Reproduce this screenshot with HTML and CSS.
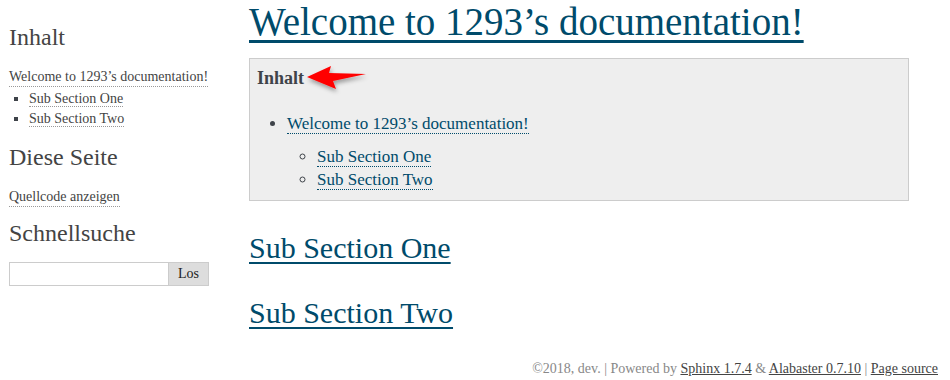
FILE: index.html
```html
<!DOCTYPE html>
<html lang="de">
<head>
<meta charset="utf-8">
<title>Welcome to 1293’s documentation!</title>
<link rel="stylesheet" href="styles.css">
</head>
<body>
<div class="page">
  <aside class="sidebar">
    <h3 class="side-title first">Inhalt</h3>
    <a class="side-link" href="#">Welcome to 1293’s documentation!</a>
    <ul class="side-list">
      <li><a class="side-link" href="#">Sub Section One</a></li>
      <li><a class="side-link" href="#">Sub Section Two</a></li>
    </ul>
    <h3 class="side-title">Diese Seite</h3>
    <a class="side-link" href="#">Quellcode anzeigen</a>
    <h3 class="side-title search-title">Schnellsuche</h3>
    <form class="search">
      <input class="search-input" type="text">
      <button class="search-btn" type="button">Los</button>
    </form>
  </aside>
  <main class="main">
    <h1 class="title"><a href="#">Welcome to 1293’s documentation!</a></h1>
    <div class="toc">
      <p class="toc-title">Inhalt</p>
      <svg class="arrow" width="72" height="34" viewBox="0 0 72 34">
        <defs>
          <filter id="sh" x="-20%" y="-40%" width="150%" height="190%">
            <feDropShadow dx="1" dy="3" stdDeviation="2" flood-color="#000" flood-opacity="0.35"/>
          </filter>
        </defs>
        <polygon filter="url(#sh)" fill="#ff0000" points="3,15 27,4 25,11 62,12 29,19 32,27"/>
      </svg>
      <ul class="toc-list">
        <li><a href="#">Welcome to 1293’s documentation!</a>
          <ul class="toc-sub">
            <li><a href="#">Sub Section One</a></li>
            <li><a href="#">Sub Section Two</a></li>
          </ul>
        </li>
      </ul>
    </div>
    <h2 class="section first-sec"><a href="#">Sub Section One</a></h2>
    <h2 class="section"><a href="#">Sub Section Two</a></h2>
  </main>
</div>
<footer class="footer">©2018, dev. | Powered by <a href="#">Sphinx 1.7.4</a> &amp; <a href="#">Alabaster 0.7.10</a> | <a href="#">Page source</a></footer>
</body>
</html>
```
FILE: styles.css
```css
html, body {
  margin: 0;
  padding: 0;
  background: #fff;
}
body {
  font-family: "Liberation Serif", "Times New Roman", serif;
  color: #3e4349;
  width: 950px;
  height: 380px;
  overflow: hidden;
}
.page {
  display: flex;
  align-items: flex-start;
}
.sidebar {
  width: 200px;
  padding-left: 9px;
  flex: none;
}
.side-title {
  font-size: 24px;
  font-weight: normal;
  line-height: 28px;
  color: #444;
  margin: 14px 0 16px;
}
.side-title.first {
  margin-top: 23px;
  margin-bottom: 16px;
}
.side-title.search-title {
  margin-top: 12px;
  margin-bottom: 15px;
}
.side-link {
  font-size: 14px;
  line-height: 20px;
  color: #444;
  text-decoration: none;
  border-bottom: 1px dotted #999;
}
.sidebar > .side-link {
  display: inline-block;
  line-height: 19px;
}
.side-list {
  list-style: square;
  margin: 2px 0 0;
  padding-left: 20px;
  font-size: 14px;
  line-height: 20px;
}
.search {
  display: flex;
  width: 200px;
  height: 24px;
}
.search-input {
  box-sizing: border-box;
  width: 160px;
  height: 24px;
  border: 1px solid #ccc;
  margin: 0;
  padding: 0 4px;
  font-family: inherit;
}
.search-btn {
  box-sizing: border-box;
  width: 40px;
  height: 24px;
  margin: 0;
  border: 1px solid #ccc;
  border-left: none;
  background: #ddd;
  font-family: "Liberation Serif", serif;
  font-size: 14px;
  color: #222;
  padding: 0;
}
.main {
  margin-left: 40px;
  width: 660px;
}
.title {
  font-size: 39px;
  font-weight: normal;
  line-height: 44px;
  margin: 0 0 14px;
}
.title a {
  color: #004b6b;
  text-decoration: underline;
  text-decoration-thickness: 3px;
  text-underline-offset: 5px;
}
.toc {
  position: relative;
  background: #eee;
  border: 1px solid #ccc;
  padding: 7px 7px 9px;
}
.toc-title {
  font-size: 18px;
  font-weight: bold;
  line-height: 24px;
  margin: 0;
  color: #3e4349;
}
.arrow {
  position: absolute;
  left: 54px;
  top: 3px;
}
.toc-list {
  list-style: disc;
  margin: 22px 0 0;
  padding-left: 30px;
  font-size: 17px;
  line-height: 23px;
}
.toc-sub {
  list-style: circle;
  margin: 10px 0 0;
  padding-left: 30px;
}
.toc a {
  color: #004b6b;
  text-decoration: none;
  border-bottom: 1px dotted #004b6b;
}
.section {
  font-size: 30px;
  font-weight: normal;
  line-height: 36px;
  margin: 29px 0 0;
}
.section a {
  color: #004b6b;
  text-decoration: underline;
  text-decoration-thickness: 2px;
  text-underline-offset: 4px;
}
.footer {
  font-size: 14px;
  line-height: 20px;
  color: #888;
  text-align: right;
  padding-right: 12px;
  margin-top: 28px;
}
.footer a {
  color: #444;
  text-decoration: underline;
}
```
